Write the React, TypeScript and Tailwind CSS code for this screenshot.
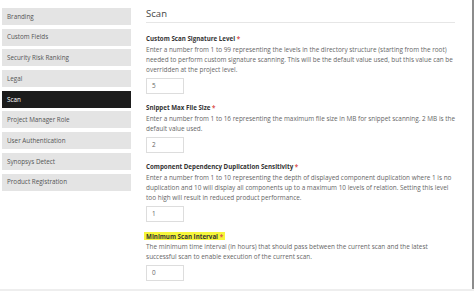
const navItems = [
  "Branding",
  "Custom Fields",
  "Security Risk Ranking",
  "Legal",
  "Scan",
  "Project Manager Role",
  "User Authentication",
  "Synopsys Detect",
  "Product Registration",
];

interface FieldProps {
  label: string;
  lines: string[];
  value: string;
  highlight?: boolean;
}

function Field({ label, lines, value, highlight }: FieldProps) {
  return (
    <div className="flex flex-col">
      <div className="h-[12px] flex items-center text-[6.2px]">
        <span
          className={
            highlight
              ? "bg-[#f6f63a] px-[2px] -ml-[2px] font-bold text-[#333] leading-[7px] py-[0.5px]"
              : "font-bold text-[#333]"
          }
        >
          {label} <span className="text-[#d9534f]">*</span>
        </span>
      </div>
      <div className="text-[#666] leading-[10px]">
        {lines.map((line) => (
          <p key={line} className="whitespace-nowrap">
            {line}
          </p>
        ))}
      </div>
      <div className="mt-[3px] w-[38px] h-[16px] border border-[#ddd] pl-[5px] flex items-center text-[#666]">
        {value}
      </div>
    </div>
  );
}

export default function App() {
  return (
    <div className="w-[474px] h-[291px] bg-white flex flex-col overflow-hidden font-['Open_Sans',sans-serif] text-[6.4px]">
      <div className="flex h-[289px]">
        <div className="w-[130px] ml-[2px] pt-[8px] flex flex-col gap-[3.7px] text-[6.3px]">
          {navItems.map((item) => (
            <div
              key={item}
              className={
                item === "Scan"
                  ? "h-[17px] flex items-center pl-[5px] bg-[#1c1c1c] text-white"
                  : "h-[17px] flex items-center pl-[5px] bg-[#e4e4e4] text-[#555]"
              }
            >
              {item}
            </div>
          ))}
        </div>

        <div className="flex-1 ml-[15px] mr-[17px] flex flex-col">
          <h1 className="mt-[7px] text-[9.5px] text-[#444] leading-[14px]">
            Scan
          </h1>
          <div className="mt-[1px] h-px bg-[#e6e6e6]" />
          <div className="mt-[10px] flex flex-col gap-[8px]">
            <Field
              label="Custom Scan Signature Level"
              lines={[
                "Enter a number from 1 to 99 representing the levels in the directory structure (starting from the root)",
                "needed to perform custom signature scanning. This will be the default value used, but this value can be",
                "overridden at the project level.",
              ]}
              value="5"
            />
            <Field
              label="Snippet Max File Size"
              lines={[
                "Enter a number from 1 to 16 representing the maximum file size in MB for snippet scanning. 2 MB is the",
                "default value used.",
              ]}
              value="2"
            />
            <Field
              label="Component Dependency Duplication Sensitivity"
              lines={[
                "Enter a number from 1 to 10 representing the depth of displayed component duplication where 1 is no",
                "duplication and 10 will display all components up to a maximum 10 levels of relation. Setting this level",
                "too high will result in reduced product performance.",
              ]}
              value="1"
            />
            <Field
              label="Minimum Scan Interval"
              lines={[
                "The minimum time interval (in hours) that should pass between the current scan and the latest",
                "successful scan to enable execution of the current scan.",
              ]}
              value="0"
              highlight
            />
          </div>
        </div>

        <div className="w-[2px] bg-[#8c8c8c]" />
      </div>
      <div className="h-[2px] bg-[#eeeeee]" />
    </div>
  );
}
